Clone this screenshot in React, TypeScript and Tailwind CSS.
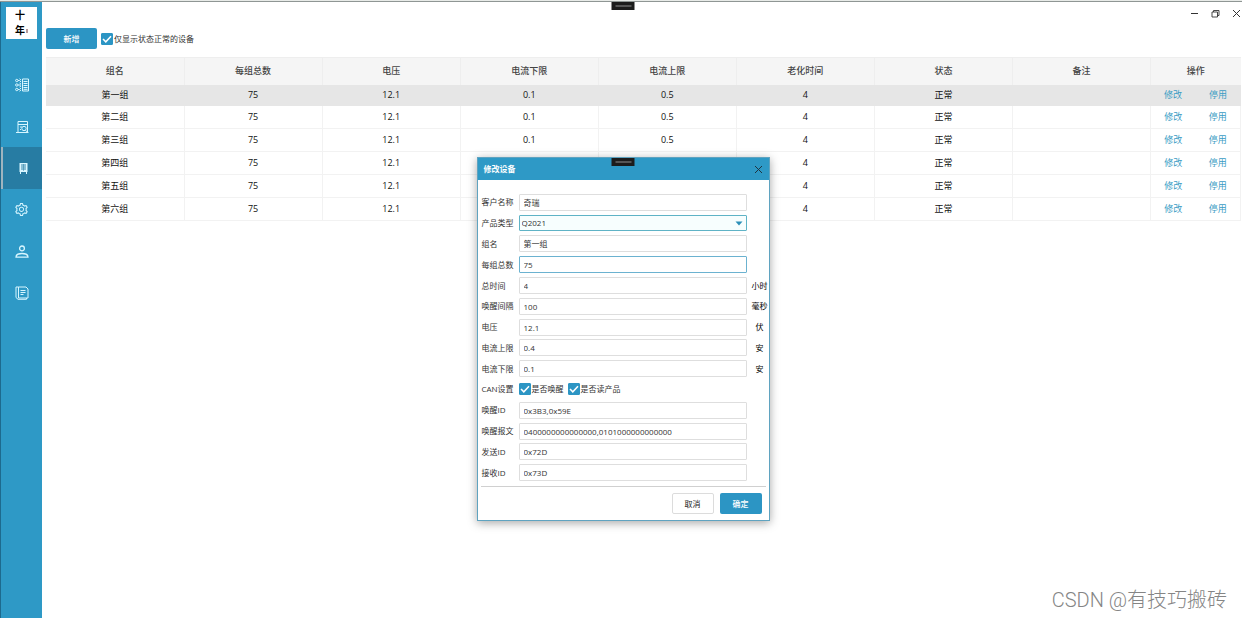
import { useState } from 'react';
import type { ReactNode } from 'react';
import { AiOutlineSetting } from 'react-icons/ai';

interface DeviceGroup {
  name: string;
  total: string;
  voltage: string;
  currentMin: string;
  currentMax: string;
  agingTime: string;
  status: string;
  remark: string;
}

interface Field {
  id: string;
  label: string;
  value: string;
  unit?: string;
  kind?: 'text' | 'select' | 'checks';
  focused?: boolean;
}

const columns = ['组名', '每组总数', '电压', '电流下限', '电流上限', '老化时间', '状态', '备注'];

const groups: DeviceGroup[] = ['第一组', '第二组', '第三组', '第四组', '第五组', '第六组'].map(name => ({
  name,
  total: '75',
  voltage: '12.1',
  currentMin: '0.1',
  currentMax: '0.5',
  agingTime: '4',
  status: '正常',
  remark: ''
}));

const fields: Field[] = [
  { id: 'customer', label: '客户名称', value: '奇瑞' },
  { id: 'productType', label: '产品类型', value: 'Q2021', kind: 'select' },
  { id: 'groupName', label: '组名', value: '第一组' },
  { id: 'total', label: '每组总数', value: '75', focused: true },
  { id: 'duration', label: '总时间', value: '4', unit: '小时' },
  { id: 'wakeInterval', label: '唤醒间隔', value: '100', unit: '毫秒' },
  { id: 'voltage', label: '电压', value: '12.1', unit: '伏' },
  { id: 'currentMax', label: '电流上限', value: '0.4', unit: '安' },
  { id: 'currentMin', label: '电流下限', value: '0.1', unit: '安' },
  { id: 'can', label: 'CAN设置', value: '', kind: 'checks' },
  { id: 'wakeId', label: '唤醒ID', value: '0x3B3,0x59E' },
  { id: 'wakeMessage', label: '唤醒报文', value: '0400000000000000,0101000000000000' },
  { id: 'sendId', label: '发送ID', value: '0x72D' },
  { id: 'receiveId', label: '接收ID', value: '0x73D' }
];

function NavIcon({ children }: { children: ReactNode }) {
  return (
    <svg className="h-[14px] w-[14px]" viewBox="0 0 14 14" fill="none" stroke="currentColor" strokeWidth="1">
      {children}
    </svg>
  );
}

const navItems = [
  {
    label: '监控',
    icon: (
      <NavIcon>
        <circle cx="1.8" cy="2.5" r="1.2" />
        <circle cx="1.8" cy="7" r="1.2" />
        <circle cx="1.8" cy="11.5" r="1.2" />
        <path d="M3 2.500h1.500L6 4M3 7h3M3 11.500h1.500L6 10M4.500 0.800L6 2M4.500 5L6 6M4.500 9L6 8M4.500 13.200L6 12" />
        <path d="M7.500 1h6v12h-6zM8.500 3.500h4M8.500 5.500h4M8.500 7.500h4M8.500 9.500h4M8.500 11.300h4" />
      </NavIcon>
    )
  },
  {
    label: '查询',
    icon: (
      <NavIcon>
        <path d="M3 12.500V1.500h9.500v11M1 12.500h12.500M3 4.500h9.500M5 7h2M5 9.500h1" />
        <circle cx="9" cy="8.500" r="2.200" />
        <path d="M10.500 10.200l1.800 1.800" />
      </NavIcon>
    )
  },
  {
    label: '设备',
    icon: (
      <NavIcon>
        <path d="M3.500 2h8v9h-8z" fill="currentColor" stroke="none" />
        <path d="M4.500 11v2M10.500 11v2" />
        <path d="M5 4h5M5 6h5M5 8h5" stroke="#277ca3" strokeWidth="0.900" />
        <path d="M7.500 3v7" stroke="#277ca3" strokeWidth="0.500" />
      </NavIcon>
    )
  },
  { label: '设置', icon: <AiOutlineSetting className="h-[15px] w-[15px]" /> },
  {
    label: '用户',
    icon: (
      <NavIcon>
        <circle cx="7" cy="3.400" r="2.400" strokeWidth="1.300" />
        <path d="M1 12.200c0-2.500 2.200-3.700 6-3.700s6 1.200 6 3.700z" strokeWidth="1.300" />
      </NavIcon>
    )
  },
  {
    label: '日志',
    icon: (
      <NavIcon>
        <path d="M3.500 2.500V1H1v10.500L3 13.300h8.500V12" />
        <path d="M3.500 1h7.500l2 2v9H3.500z" />
        <path d="M5.500 4.500h5M5.500 6.500h5M5.500 8.500h3" />
      </NavIcon>
    )
  }
];

// Black debug toolbar handle that hangs from the top edge of each window
function Handle() {
  return (
    <div className="absolute top-0 left-1/2 flex h-2 w-[23px] -translate-x-1/2 items-center justify-center bg-[#1c1c1c]">
      <div className="h-[2px] w-4 bg-[#555]" />
    </div>
  );
}

function CheckBox({ label }: { label: string }) {
  const [checked, setChecked] = useState(true);
  return (
    <label className="flex items-center gap-px whitespace-nowrap">
      <span className="relative flex h-3 w-3">
        <input
          type="checkbox"
          checked={checked}
          onChange={e => setChecked(e.target.checked)}
          className="h-3 w-3 appearance-none rounded-[1px] border border-[#2c95c4] bg-white checked:bg-[#2c95c4]"
        />
        {checked && (
          <svg className="pointer-events-none absolute inset-0" viewBox="0 0 12 12" fill="none" stroke="white" strokeWidth="1.500">
            <path d="M2 6l2.800 2.800L10 3.200" />
          </svg>
        )}
      </span>
      {label}
    </label>
  );
}

function Sidebar() {
  return (
    <aside className="w-[42px] shrink-0 border-l border-[#1d6a8e] bg-[#2e99c6]">
      <div className="mx-auto mt-[5px] flex h-8 w-[31px] items-center justify-center gap-px bg-white text-[10px] leading-[15px] font-bold text-black">
        <div className="flex flex-col">
          <span>十</span>
          <span>年</span>
        </div>
        <i className="mt-4 h-1 w-[2px] bg-[#b89a9a]" />
      </div>
      <nav className="mt-[25px] flex h-[250px] flex-col">
        {navItems.map((item, index) => (
          <button
            key={item.label}
            aria-label={item.label}
            className={`flex w-full flex-1 items-center justify-center text-[#d8f6ff] ${
              index === 2 ? 'border-l-2 border-[#9fb4bf] bg-[#277ca3]' : ''
            }`}
          >
            {item.icon}
          </button>
        ))}
      </nav>
    </aside>
  );
}

function WindowControls() {
  return (
    <div className="flex h-[22px] items-center justify-end gap-3 text-[#333]">
      <button aria-label="最小化">
        <svg className="h-[9px] w-[9px]" viewBox="0 0 9 9" stroke="currentColor">
          <path d="M1 4.500h7" />
        </svg>
      </button>
      <button aria-label="还原">
        <svg className="h-[9px] w-[9px]" viewBox="0 0 9 9" fill="none" stroke="currentColor" strokeWidth="0.900">
          <path d="M1 3h5.500v5H1zM2.500 3V1.500H8v5H6.500" />
        </svg>
      </button>
      <button aria-label="关闭">
        <svg className="h-[9px] w-[9px]" viewBox="0 0 9 9" stroke="currentColor">
          <path d="M1 1l7 7M8 1L1 8" />
        </svg>
      </button>
    </div>
  );
}

function GroupTable() {
  return (
    <table className="mt-2 h-[164px] w-full table-fixed border-collapse text-center text-[9px] leading-3 text-[#111]">
      <thead>
        <tr className="h-[27px] bg-[#f5f5f5]">
          {columns.map(column => (
            <th key={column} className="border-t border-r border-[#eeeeee] p-0 font-medium text-[#444]">
              {column}
            </th>
          ))}
          <th className="w-[90px] border-t border-[#eeeeee] p-0 font-medium text-[#444]">操作</th>
        </tr>
      </thead>
      <tbody>
        {groups.map((group, index) => (
          <tr key={group.name} className={index === 0 ? 'bg-[#e6e6e6]' : 'border-b border-[#f2f2f2] [&>td]:border-r [&>td]:border-[#f2f2f2]'}>
            <td className="p-0">{group.name}</td>
            <td className="p-0">{group.total}</td>
            <td className="p-0">{group.voltage}</td>
            <td className="p-0">{group.currentMin}</td>
            <td className="p-0">{group.currentMax}</td>
            <td className="p-0">{group.agingTime}</td>
            <td className="p-0">{group.status}</td>
            <td className="p-0">{group.remark}</td>
            <td className="p-0">
              <div className="grid grid-cols-2 text-[#3a9cc4]">
                <a href="#edit">修改</a>
                <a href="#disable">停用</a>
              </div>
            </td>
          </tr>
        ))}
      </tbody>
    </table>
  );
}

function FieldControl({ field }: { field: Field }) {
  if (field.kind === 'checks') {
    return (
      <div className="flex flex-1 items-center gap-1">
        <CheckBox label="是否唤醒" />
        <CheckBox label="是否读产品" />
      </div>
    );
  }
  if (field.kind === 'select') {
    return (
      <div className="relative flex flex-1">
        <select
          id={field.id}
          defaultValue={field.value}
          className="h-4 w-full appearance-none rounded-[1px] border border-[#5fb3c6] bg-[#f7fefe] px-[2px]"
        >
          <option>{field.value}</option>
        </select>
        <svg className="pointer-events-none absolute top-[6px] right-1 h-[5px] w-2" viewBox="0 0 8 5" fill="#2c8fb8">
          <path d="M0.500 0.500h7L4 4.500z" />
        </svg>
      </div>
    );
  }
  return (
    <input
      id={field.id}
      type="text"
      defaultValue={field.value}
      className={`h-[17px] min-w-0 flex-1 rounded-[1px] border bg-white px-1 ${field.focused ? 'border-[#6bb2d0]' : 'border-[#dedede]'}`}
    />
  );
}

function EditDialog() {
  return (
    <div
      role="dialog"
      aria-label="修改设备"
      className="relative w-[293px] border border-[#5fa3c0] bg-white text-[8px] leading-3 text-[#333] shadow-[0_2px_9px_rgba(0,0,0,0.35)]"
    >
      <Handle />
      <div className="flex h-[22px] items-center justify-between bg-[#2e99c6] px-[6px]">
        <h2 className="font-bold text-white">修改设备</h2>
        <button aria-label="关闭">
          <svg className="h-[9px] w-[9px]" viewBox="0 0 9 9" stroke="#1f3540">
            <path d="M1 1l7 7M8 1L1 8" />
          </svg>
        </button>
      </div>
      <form className="mt-3 grid h-[291px] auto-rows-fr pl-1">
        {fields.map(field => (
          <div key={field.id} className="flex items-center">
            {field.kind === 'checks' ? (
              <span className="w-[37px] whitespace-nowrap">{field.label}</span>
            ) : (
              <label htmlFor={field.id} className="w-[37px] whitespace-nowrap">
                {field.label}
              </label>
            )}
            <FieldControl field={field} />
            <span className="ml-1 w-[18px] text-center whitespace-nowrap text-black">{field.unit}</span>
          </div>
        ))}
      </form>
      <div className="mx-[3px] mt-[3px] flex justify-end gap-[6px] border-t border-[#d0d0d0] pt-[6px] pr-1 pb-[6px]">
        <button className="h-[21px] w-[42px] rounded-[2px] border border-[#dcdcdc] bg-white text-[#222]">取消</button>
        <button className="h-[21px] w-[42px] rounded-[2px] bg-[#2c95c4] font-medium text-white">确定</button>
      </div>
    </div>
  );
}

export default function App() {
  return (
    <div className="relative flex min-h-screen flex-col border-t border-[#e8ebe8] bg-white font-['Open_Sans','Noto_Sans_CJK_SC',sans-serif]">
      <div className="flex flex-1 border-t border-[#8f9694]">
        <Sidebar />
        <main className="min-w-0 flex-1 pr-px pl-1">
          <WindowControls />
          <div className="mt-1 flex items-center gap-1 text-[8px] leading-3 text-[#333]">
            <button className="h-[21px] w-[51px] rounded-[2px] bg-[#2c95c4] font-medium text-white">新增</button>
            <CheckBox label="仅显示状态正常的设备" />
          </div>
          <GroupTable />
        </main>
      </div>

      {/* Window handle and dialog lie over the page */}
      <div className="pointer-events-none absolute inset-0 flex items-start justify-center pt-[156px] pl-1">
        <div className="absolute inset-x-0 top-px ml-1">
          <Handle />
        </div>
        <div className="pointer-events-auto">
          <EditDialog />
        </div>
      </div>

      <div className="absolute right-[15px] bottom-1 font-['Roboto','Noto_Sans_CJK_SC',sans-serif] text-[20px] leading-7 font-light text-[#858585]">
        CSDN @有技巧搬砖
      </div>
    </div>
  );
}
